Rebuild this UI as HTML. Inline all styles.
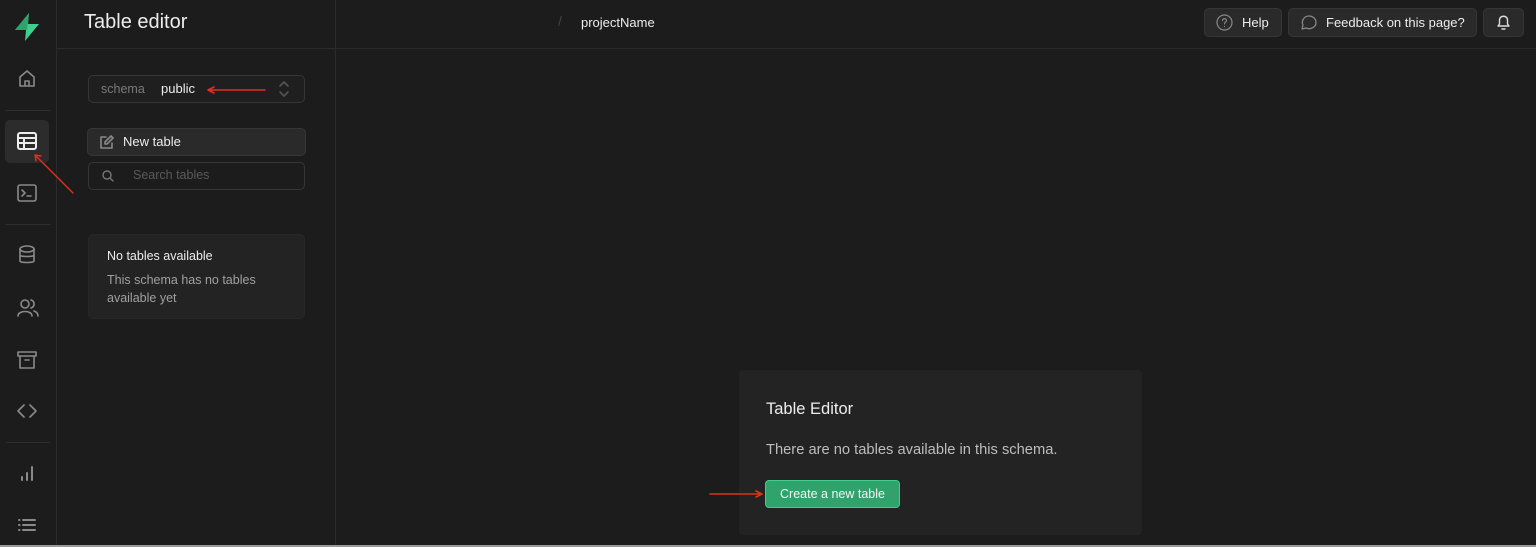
<!DOCTYPE html>
<html><head><meta charset="utf-8"><style>
*{box-sizing:border-box;margin:0;padding:0}
body{width:1536px;height:547px;background:#1c1c1c;font-family:"Liberation Sans",sans-serif;color:#ededed;position:relative;overflow:hidden}
.abs{position:absolute}
.side{left:0;top:0;width:57px;height:547px;border-right:1px solid #2b2b2b;background:#1c1c1c}
.panel{left:57px;top:0;width:279px;height:547px;border-right:1px solid #2b2b2b}
.hline{top:48px;height:1px;background:#2b2b2b}
svg{position:absolute;fill:none;stroke:#8a8a8a;stroke-width:1.6;stroke-linecap:round;stroke-linejoin:round}
.btn{background:#2a2a2a;border:1px solid #363636;border-radius:5px;font-size:13px;color:#ededed}
</style></head><body>
<div class="abs side"></div>
<div class="abs panel"></div>
<div class="abs hline" style="left:57px;width:1479px"></div>
<div class="abs" style="left:6px;top:110px;width:44px;height:1px;background:#2e2e2e"></div>
<div class="abs" style="left:6px;top:224px;width:44px;height:1px;background:#2e2e2e"></div>
<div class="abs" style="left:6px;top:442px;width:44px;height:1px;background:#2e2e2e"></div>
<div class="abs" style="left:0;top:545px;width:1536px;height:2px;background:#9a9a9a"></div>
<svg style="left:13px;top:12px" width="28" height="30" viewBox="0 0 28 30"><path d="M16 1 L2 18 H13 L12 29 L26 12 H15 Z" fill="#3ecf8e" stroke="none"/><path d="M16 1 L2 18 H14 Z" fill="#2fa36b" stroke="none"/></svg>
<svg style="left:17px;top:69px" width="20" height="20" viewBox="0 0 20 20"><path d="M3 8 L10 2 L17 8 V17 H3 Z M8 17 V12 H12 V17"/></svg>
<div class="abs" style="left:5px;top:120px;width:44px;height:43px;background:#2c2c2c;border-radius:5px"></div>
<svg style="left:17px;top:132px;stroke:#ededed;stroke-width:2" width="20" height="18" viewBox="0 0 20 18"><rect x="1" y="1" width="18" height="16" rx="2"/><path d="M1 6 H19 M1 11 H19 M7 6 V17"/></svg>
<svg style="left:17px;top:184px" width="20" height="18" viewBox="0 0 20 18"><rect x="1" y="1" width="18" height="16" rx="2"/><path d="M5 6 L8 9 L5 12 M10 12 H14"/></svg>
<svg style="left:18px;top:245px" width="18" height="20" viewBox="0 0 18 20"><ellipse cx="9" cy="4" rx="7" ry="3"/><path d="M2 4 V16 C2 18 16 18 16 16 V4 M2 10 C2 12 16 12 16 10"/></svg>
<svg style="left:17px;top:298px" width="22" height="20" viewBox="0 0 22 20"><circle cx="8" cy="6" r="4"/><path d="M1 18 C1 12 15 12 15 18 M14 2 C18 3 18 9 14 10 M17 13 C20 14 21 16 21 18"/></svg>
<svg style="left:17px;top:350px" width="20" height="20" viewBox="0 0 20 20"><rect x="1" y="2" width="18" height="4"/><path d="M3 6 V18 H17 V6 M8 10 H12"/></svg>
<svg style="left:17px;top:403px" width="20" height="16" viewBox="0 0 20 16"><path d="M7 2 L1 8 L7 14 M13 2 L19 8 L13 14"/></svg>
<svg style="left:19px;top:464px;stroke-width:2" width="16" height="18" viewBox="0 0 16 18"><path d="M3 16 V13 M8 16 V9 M13 16 V3"/></svg>
<svg style="left:18px;top:518px;stroke-width:2" width="18" height="14" viewBox="0 0 18 14"><path d="M1 2 H1.5 M1 7 H1.5 M1 12 H1.5 M5 2 H17 M5 7 H17 M5 12 H17"/></svg>
<svg style="left:30px;top:150px;stroke:#e0301e;stroke-width:1.4" width="46" height="46" viewBox="0 0 46 46"><path d="M43 43 L5 5 M5 5 L6 11 M5 5 L11 6"/></svg>

<div class="abs" style="left:84px;top:11px;font-size:20px;color:#ededed">Table editor</div>
<div class="abs" style="left:88px;top:75px;width:217px;height:28px;border:1px solid #363636;border-radius:5px;background:#1f1f1f"></div>
<div class="abs" style="left:101px;top:82px;font-size:12.5px;color:#7a7a7a">schema</div>
<div class="abs" style="left:161px;top:81px;font-size:13px;color:#ededed">public</div>
<svg style="left:206px;top:85px;stroke:#e0301e;stroke-width:1.6" width="62" height="10" viewBox="0 0 62 10"><path d="M2 5 H59 M2 5 L8 2 M2 5 L8 8"/></svg>
<svg style="left:278px;top:80px;stroke:#555" width="12" height="18" viewBox="0 0 12 18"><path d="M2 6 L6 2 L10 6 M2 12 L6 16 L10 12"/></svg>
<div class="abs btn" style="left:87px;top:128px;width:219px;height:28px"></div>
<svg style="left:100px;top:135px" width="14" height="14" viewBox="0 0 14 14"><path d="M6 2 H1 V13 H12 V8 M11 1 L13 3 L7 9 H5 V7 Z"/></svg>
<div class="abs" style="left:123px;top:134px;font-size:13px">New table</div>
<div class="abs" style="left:88px;top:162px;width:217px;height:28px;border:1px solid #363636;border-radius:5px"></div>
<svg style="left:102px;top:170px;stroke:#777;stroke-width:1.4" width="12" height="12" viewBox="0 0 12 12"><circle cx="5" cy="5" r="4"/><path d="M8 8 L11 11"/></svg>
<div class="abs" style="left:133px;top:168px;font-size:12.5px;color:#5a5a5a">Search tables</div>
<div class="abs" style="left:88px;top:234px;width:217px;height:85px;background:#232323;border-radius:5px;border:1px solid #272727"></div>
<div class="abs" style="left:107px;top:249px;font-size:12.5px;color:#ededed">No tables available</div>
<div class="abs" style="left:107px;top:271px;font-size:12.5px;color:#a0a0a0;line-height:18px;width:180px">This schema has no tables available yet</div>

<div class="abs" style="left:558px;top:13px;font-size:14px;color:#444">/</div>
<div class="abs" style="left:581px;top:15px;font-size:13px;color:#ededed">projectName</div>
<div class="abs btn" style="left:1204px;top:8px;width:78px;height:29px"></div>
<svg style="left:1216px;top:14px;stroke:#888;stroke-width:1.2" width="17" height="17" viewBox="0 0 17 17"><circle cx="8.5" cy="8.5" r="7.5"/><path d="M6.5 6.5 C6.5 4 10.5 4 10.5 6.5 C10.5 8 8.5 8 8.5 10 M8.5 12.5 V12.6"/></svg>
<div class="abs" style="left:1242px;top:15px;font-size:13px">Help</div>
<div class="abs btn" style="left:1288px;top:8px;width:189px;height:29px"></div>
<svg style="left:1300px;top:14px;stroke:#888;stroke-width:1.3" width="17" height="17" viewBox="0 0 17 17"><path d="M2 15 L3 11 C1 7 4 2 9 2 C13 2 16 5 16 8.5 C16 13 11 16 6 14 Z"/></svg>
<div class="abs" style="left:1326px;top:15px;font-size:13px">Feedback on this page?</div>
<div class="abs btn" style="left:1483px;top:8px;width:41px;height:29px"></div>
<svg style="left:1495px;top:13px;stroke:#ddd;stroke-width:1.4" width="17" height="18" viewBox="0 0 17 18"><path d="M3 13 H14 L12.5 11 V7 C12.5 2 4.5 2 4.5 7 V11 Z M7 16 H10"/></svg>

<div class="abs" style="left:739px;top:370px;width:403px;height:165px;background:#232323;border-radius:4px"></div>
<div class="abs" style="left:766px;top:400px;font-size:16.5px;color:#ededed">Table Editor</div>
<div class="abs" style="left:766px;top:442px;font-size:14.7px;color:#bdbdbd">There are no tables available in this schema.</div>
<div class="abs" style="left:765px;top:480px;width:135px;height:28px;background:#2fa36b;border:1px solid #3ecf8e;border-radius:4px;font-size:12.5px;color:#f4f4f4;text-align:center;line-height:26px">Create a new table</div>
<svg style="left:709px;top:489px;stroke:#e0301e;stroke-width:1.6" width="56" height="10" viewBox="0 0 56 10"><path d="M1 5 H53 M53 5 L47 2 M53 5 L47 8"/></svg>
</body></html>
